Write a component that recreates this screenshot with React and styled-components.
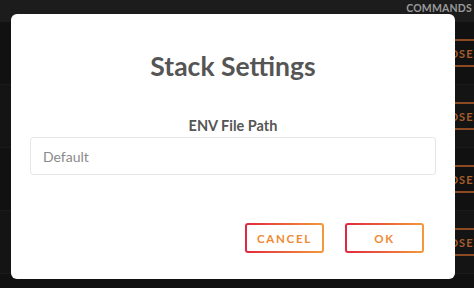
import styled, { createGlobalStyle } from "styled-components";

const Global = createGlobalStyle`
  html, body {
    margin: 0;
    padding: 0;
    background: #111111;
    overflow: hidden;
  }
  * {
    box-sizing: border-box;
  }
`;

const Page = styled.div`
  position: relative;
  width: 474px;
  height: 288px;
  font-family: Lato, "Open Sans", sans-serif;
  background: #111111;
  overflow: hidden;
`;

const Header = styled.div`
  height: 22px;
  background: #1c1c1c;
  display: flex;
  justify-content: flex-end;
  align-items: flex-start;
  padding: 1px 2px 0 0;
  color: #9a9a9a;
  font-size: 10.5px;
  line-height: 14px;
  font-weight: 700;
  letter-spacing: 0.2px;
`;

const Row = styled.div`
  height: 63px;
  display: flex;
  justify-content: flex-end;
  align-items: center;
  background: ${(p) => (p.$alt ? "#141414" : "#111111")};
  border-bottom: 1px solid #1a1a1a;
`;

const CloseButton = styled.button`
  width: 80px;
  height: 28px;
  margin-right: -20px;
  border: 2px solid #8c4a22;
  border-radius: 3px;
  background: transparent;
  color: #a65d2c;
  font-family: inherit;
  font-size: 11px;
  font-weight: 700;
  letter-spacing: 1px;
`;

const Modal = styled.div`
  position: absolute;
  left: 11px;
  top: 14px;
  width: 444px;
  height: 265px;
  background: #ffffff;
  border-radius: 6px;
  padding: 37px 19px 0;
  display: flex;
  flex-direction: column;
  align-items: center;
`;

const Title = styled.h2`
  margin: 0;
  font-size: 26.5px;
  font-weight: 700;
  color: #555555;
  line-height: 30px;
`;

const Label = styled.label`
  margin-top: 36px;
  font-size: 14.5px;
  font-weight: 700;
  color: #555555;
  line-height: 18px;
`;

const Input = styled.input`
  margin-top: 2px;
  width: 100%;
  height: 38px;
  border: 1px solid #e6e6e6;
  border-radius: 3px;
  padding: 0 12px;
  font-family: inherit;
  font-size: 14px;
  color: #555555;
  outline: none;
  caret-color: #555;

  &::placeholder {
    color: #8a8a8a;
  }
`;

const Actions = styled.div`
  align-self: stretch;
  display: flex;
  justify-content: flex-end;
  gap: 21px;
  margin-top: 48px;
  padding-right: 12px;
`;

const ActionButton = styled.button`
  width: 79px;
  height: 30px;
  border: 2px solid transparent;
  border-radius: 3px;
  background: linear-gradient(#ffffff, #ffffff) padding-box,
    linear-gradient(90deg, #e0283f, #f39a3a) border-box;
  color: #f08a34;
  font-family: inherit;
  font-size: 11.5px;
  font-weight: 700;
  letter-spacing: 1.7px;
  padding: 0;
  cursor: pointer;
`;

export default function App() {
  return (
    <Page>
      <Global />
      <Header>COMMANDS</Header>
      {[0, 1, 2, 3].map((i) => (
        <Row key={i} $alt={i % 2 === 1}>
          <CloseButton>CLOSE</CloseButton>
        </Row>
      ))}
      <Modal>
        <Title>Stack Settings</Title>
        <Label>ENV File Path</Label>
        <Input placeholder="Default" autoFocus />
        <Actions>
          <ActionButton>CANCEL</ActionButton>
          <ActionButton>OK</ActionButton>
        </Actions>
      </Modal>
    </Page>
  );
}
